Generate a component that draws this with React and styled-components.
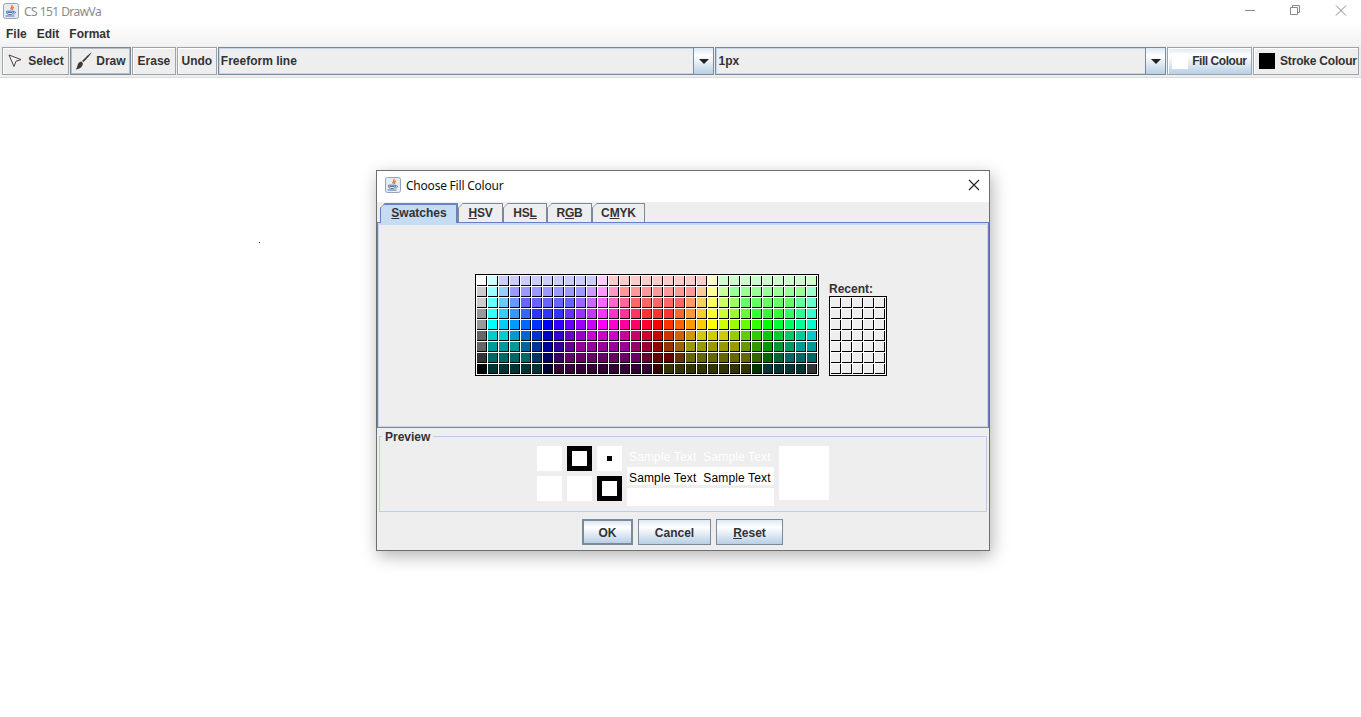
import React from "react";
import styled, { createGlobalStyle } from "styled-components";

const GlobalStyle = createGlobalStyle`
  html, body { margin: 0; padding: 0; background: #fff; }
  body { font-family: "Liberation Sans", Arial, sans-serif; overflow: hidden; }
`;

const expand = (row) =>
  row.split(" ").flatMap((part) => {
    const [hex, count] = part.split("*");
    return Array(Number(count || 1)).fill("#" + hex);
  });

const SWATCH_ROWS = [
  "ffffff ccffff ccccff*9 ffccff ffcccc*9 ffffcc ccffcc*9",
  "cccccc 99ffff 99ccff 9999ff*7 cc99ff ff99ff ff99cc ff9999*7 ffcc99 ffff99 ccff99 99ff99*7 99ffcc",
  "cccccc 66ffff 66ccff 6699ff 6666ff*5 9966ff cc66ff ff66ff ff66cc ff6699 ff6666*5 ff9966 ffcc66 ffff66 ccff66 99ff66 66ff66*5 66ff99 66ffcc",
  "999999 33ffff 33ccff 3399ff 3366ff 3333ff*3 6633ff 9933ff cc33ff ff33ff ff33cc ff3399 ff3366 ff3333*3 ff6633 ff9933 ffcc33 ffff33 ccff33 99ff33 66ff33 33ff33*3 33ff66 33ff99 33ffcc",
  "999999 00ffff 00ccff 0099ff 0066ff 0033ff 0000ff 3300ff 6600ff 9900ff cc00ff ff00ff ff00cc ff0099 ff0066 ff0033 ff0000 ff3300 ff6600 ff9900 ffcc00 ffff00 ccff00 99ff00 66ff00 33ff00 00ff00 00ff33 00ff66 00ff99 00ffcc",
  "666666 00cccc*2 0099cc 0066cc 0033cc 0000cc 3300cc 6600cc 9900cc cc00cc*3 cc0099 cc0066 cc0033 cc0000 cc3300 cc6600 cc9900 cccc00*3 99cc00 66cc00 33cc00 00cc00 00cc33 00cc66 00cc99 00cccc",
  "666666 009999*3 006699 003399 000099 330099 660099 990099*5 990066 990033 990000 993300 996600 999900*5 669900 339900 009900 009933 009966 009999*2",
  "333333 006666*4 003366 000066 330066 660066*7 660033 660000*2 663300 666600*6 336600 006600 006633 006666*3",
  "000000 003333*5 000033 330033*9 330000 333300*8 003300 003333*4 333333",
];
const SWATCHES = SWATCH_ROWS.flatMap(expand);
const RECENT = Array(35).fill("#eeeeee");

const Page = styled.div`
  position: relative;
  height: 717px;
  display: flex;
  flex-direction: column;
  background: #fff;
`;

const TitleBar = styled.div`
  height: 22px;
  display: flex;
  align-items: center;
  padding-left: 3px;
  background: #fff;
`;

const AppTitle = styled.span`
  margin-left: 5px;
  font-family: "Noto Sans", sans-serif;
  font-size: 12px;
  letter-spacing: -0.55px;
  color: #8a8a8a;
`;

const WindowControls = styled.div`
  margin: 0 -4px 0 auto;
  display: flex;
  align-items: center;
`;

const ControlIcon = styled.svg`
  width: 46px;
  height: 22px;
  display: block;
`;

const MenuBar = styled.div`
  height: 24px;
  display: flex;
  align-items: center;
  gap: 10px;
  padding: 0 0 0 6px;
  background: linear-gradient(#ffffff, #f3f3f3);
`;

const MenuItem = styled.span`
  font-size: 12px;
  font-weight: bold;
  color: #333;
`;

const Toolbar = styled.div`
  height: 28px;
  padding: 1px 2px 2px;
  display: flex;
  gap: 1px;
  background: #eeeeee;
  border-bottom: 1px solid #dcdcdc;
`;

const ToolButton = styled.button`
  box-sizing: border-box;
  width: ${(p) => p.$w}px;
  height: 28px;
  margin: 0;
  padding: ${(p) => (p.$chip ? `0 0 0 ${p.$chip}px` : "0")};
  display: flex;
  align-items: center;
  justify-content: ${(p) => (p.$chip ? "flex-start" : "center")};
  gap: ${(p) => p.$gap || 5}px;
  font: bold 12px "Liberation Sans", Arial, sans-serif;
  color: #333;
  background: ${(p) =>
    p.$hot ? "linear-gradient(#dde8f3, #ffffff 30%, #b8cfe5)" : "#eeeeee"};
  border: 1px solid ${(p) => (p.$dark ? "#7a8a99" : "#9aa5b1")};
  box-shadow: ${(p) =>
    p.$dark ? "inset 0 0 0 1px #b4bec9" : "inset 1px 1px 0 #fff"};
`;

const ChipLabel = styled.span`
  letter-spacing: ${(p) => p.$track}px;
`;

const ColourChip = styled.span`
  width: 16px;
  height: 16px;
  background: ${(p) => p.$color};
`;

const Combo = styled.div`
  box-sizing: border-box;
  width: ${(p) => p.$w}px;
  height: 28px;
  display: flex;
  background: #eeeeee;
  border: 1px solid #7a8a99;
  box-shadow: inset 0 0 0 1px #c5d6e8;
`;

const ComboValue = styled.div`
  flex: 1;
  padding: 6px 0 0 2px;
  font-size: 12px;
  font-weight: bold;
  color: #333;
`;

const ComboArrow = styled.div`
  width: 19px;
  display: flex;
  align-items: center;
  justify-content: center;
  background: linear-gradient(#dde8f3, #ffffff 30%, #b8cfe5);
  border-left: 1px solid #7a8a99;

  &::after {
    content: "";
    border-left: 5px solid transparent;
    border-right: 5px solid transparent;
    border-top: 5px solid #222;
  }
`;

const Canvas = styled.div`
  flex: 1;
  position: relative;
  background: #fff;
`;

const Speck = styled.div`
  position: absolute;
  left: 259px;
  top: 164px;
  width: 1px;
  height: 1px;
  background: #333;
`;

const Dialog = styled.div`
  position: absolute;
  left: 376px;
  top: 170px;
  box-sizing: border-box;
  width: 614px;
  height: 381px;
  display: flex;
  flex-direction: column;
  background: #eeeeee;
  border: 1px solid #6e6e6e;
  box-shadow: 2px 5px 16px rgba(0, 0, 0, 0.3);
`;

const DialogTitle = styled.div`
  height: 31px;
  flex: none;
  display: flex;
  align-items: center;
  padding: 0 0 3px 8px;
  box-sizing: border-box;
  background: #fff;
  font-family: "Noto Sans", sans-serif;
  font-size: 12px;
  letter-spacing: -0.22px;
  color: #111;
`;

const DialogTitleText = styled.span`
  margin-left: 5px;
`;

const CloseIcon = styled.svg`
  width: 12px;
  height: 12px;
  margin: 0 9px 0 auto;
`;

const TabStrip = styled.div`
  display: flex;
  flex: none;
  height: 20px;
  padding-left: 3px;
`;

const Tab = styled.div`
  position: relative;
  box-sizing: border-box;
  width: ${(p) => p.$w}px;
  height: ${(p) => (p.$active ? 20 : 19)}px;
  margin-top: 1px;
  text-align: center;
  padding-top: 2px;
  font-size: 12px;
  font-weight: bold;
  letter-spacing: ${(p) => (p.$active ? 0 : -0.15)}px;
  color: #333;
  background: ${(p) => (p.$active ? "#c5dcf2" : "#eeeeee")};
  border-top: 1px solid #7a8a99;
  border-right: 1px solid #7a8a99;
  border-left: 1px solid ${(p) => (p.$active ? "#6382bf" : "#7a8a99")};
  clip-path: polygon(5px 0, 100% 0, 100% 100%, 0 100%, 0 5px);

  &::before {
    content: "";
    position: absolute;
    left: -2px;
    top: 1px;
    width: 7px;
    height: 1px;
    background: #7a8a99;
    transform: rotate(-45deg);
  }

  ${(p) =>
    p.$active &&
    `
    box-shadow: inset -1px 0 0 #6382bf, inset 0 1px 0 #6382bf;
  `}
`;

const SwatchPane = styled.div`
  box-sizing: border-box;
  flex: none;
  height: 206px;
  padding: 0 4px 51px 0;
  display: flex;
  align-items: flex-end;
  justify-content: center;
  gap: 10px;
  background: #eeeeee;
  border: 1px solid #6382bf;
  border-bottom-color: #7a8a99;
  box-shadow: inset 0 2px 0 #c5dcf2, inset 0 0 0 1px #c5d6e8;
`;

const SwatchGrid = styled.div`
  display: grid;
  grid-template-columns: repeat(${(p) => p.$cols}, 10px);
  grid-auto-rows: 10px;
  gap: 1px;
  padding: 1px;
  background: #fff;
  border: 1px solid #000;
`;

const Swatch = styled.div`
  box-sizing: border-box;
  background: ${(p) => p.$color};
  border-right: 1px solid #000;
  border-bottom: 1px solid #000;
`;

const RecentColumn = styled.div`
  display: flex;
  flex-direction: column;
`;

const RecentLabel = styled.div`
  font-size: 12px;
  font-weight: bold;
  color: #333;
  line-height: 14px;
`;

const PreviewBox = styled.fieldset`
  box-sizing: border-box;
  flex: none;
  margin: 0 2px;
  padding: 0;
  height: 84px;
  min-width: 0;
  border: 1px solid #b8cfe5;
`;

const PreviewLegend = styled.legend`
  margin-left: 2px;
  padding: 2px 3px 0;
  font-size: 12px;
  font-weight: bold;
  color: #333;
  line-height: 14px;
`;

const PreviewBody = styled.div`
  display: flex;
  gap: 5px;
  margin-left: 157px;
  padding-top: 2px;
`;

const SquareGrid = styled.div`
  display: grid;
  grid-template-columns: repeat(3, 25px);
  grid-auto-rows: 25px;
  gap: 5px;
`;

const Square = styled.div`
  box-sizing: border-box;
  display: flex;
  align-items: center;
  justify-content: center;
  background: #fff;
  border: ${(p) => (p.$ring ? "5px solid #000" : "0")};
`;

const Pip = styled.div`
  width: 5px;
  height: 5px;
  background: #000;
`;

const SampleColumn = styled.div`
  width: 147px;
  display: flex;
  flex-direction: column;
`;

const SampleRow = styled.div`
  height: ${(p) => p.$h}px;
  margin-bottom: ${(p) => p.$gap}px;
  padding-left: 2px;
  font-family: "Liberation Sans", Arial, sans-serif;
  font-size: 12px;
  letter-spacing: 0.14px;
  line-height: 23px;
  white-space: pre;
  background: ${(p) => (p.$plain ? "transparent" : "#fff")};
  color: ${(p) => (p.$plain ? "#fff" : "#000")};
`;

const BigSquare = styled.div`
  width: 50px;
  height: 54px;
  background: #fff;
`;

const ButtonRow = styled.div`
  display: flex;
  justify-content: center;
  gap: 5px;
  padding: 7px 2px 0 0;
`;

const DialogButton = styled.button`
  box-sizing: border-box;
  width: ${(p) => p.$w}px;
  height: 26px;
  margin: 0;
  padding: 1px 0 0 1px;
  font: bold 12px "Liberation Sans", Arial, sans-serif;
  color: #333;
  background: linear-gradient(#dde8f3, #ffffff 30%, #b8cfe5);
  border: ${(p) => (p.$focus ? "2px solid #7a8a99" : "1px solid #7a8a99")};
`;

function JavaIcon() {
  return (
    <svg width="16" height="16" viewBox="0 0 16 16">
      <rect x="0.5" y="0.5" width="15" height="15" rx="2" fill="#e6ebf2" stroke="#93a5ba" />
      <path d="M8.800 2c1.400 1.700-2 2.700-.5 4.800M10.800 4c-1.800.8-1.400 1.800-.8 2.800" fill="none" stroke="#e8731a" strokeWidth="1.300" />
      <path d="M3.500 8.200h7c0 0 .2 3.300-2.200 3.300H5.700c-2.400 0-2.200-3.300-2.200-3.300z" fill="none" stroke="#4f78a8" strokeWidth="1" />
      <path d="M2.500 13h9M4.500 9.500h5" stroke="#4f78a8" strokeWidth="1" />
      <path d="M10.500 8.800h1.500c1 0 .8 2-1.500 2.200" fill="none" stroke="#4f78a8" strokeWidth="0.900" />
    </svg>
  );
}

function SelectIcon() {
  return (
    <svg width="16" height="16" viewBox="0 0 16 16">
      <path d="M2 2l12 4.600-5 1.600-2 5.300z" fill="#f4f4f4" stroke="#444" strokeWidth="1" strokeLinejoin="round" />
    </svg>
  );
}

function BrushIcon() {
  return (
    <svg width="17" height="18" viewBox="0 0 17 18">
      <path d="M16.500.5c.4.400-5 6.800-8.200 9.600l-1.200-1.200C10 5.900 16.100.1 16.500.5z" fill="#3a3a3a" />
      <path d="M6.400 9.500l1.400 1.400c.4 3-2.400 6.300-7.300 6.600 2-1.500 1.500-3.600 2.500-5.400.8-1.500 2-2.400 3.400-2.600z" fill="#3a3a3a" />
    </svg>
  );
}

export default function App() {
  return (
    <Page>
      <GlobalStyle />
      <TitleBar>
        <JavaIcon />
        <AppTitle>CS 151 DrawVa</AppTitle>
        <WindowControls>
          <ControlIcon viewBox="0 0 46 22">
            <path d="M18 10.500h10" stroke="#8a8a8a" />
          </ControlIcon>
          <ControlIcon viewBox="0 0 46 22">
            <path d="M17.500 7.500h7v7h-7zM19.500 7.500v-2h7v7h-2" fill="none" stroke="#8a8a8a" />
          </ControlIcon>
          <ControlIcon viewBox="0 0 46 22">
            <path d="M17 5.500l10 10M27 5.500l-10 10" stroke="#8a8a8a" />
          </ControlIcon>
        </WindowControls>
      </TitleBar>
      <MenuBar>
        <MenuItem>File</MenuItem>
        <MenuItem>Edit</MenuItem>
        <MenuItem>Format</MenuItem>
      </MenuBar>
      <Toolbar>
        <ToolButton $w={67}><SelectIcon />Select</ToolButton>
        <ToolButton $w={61} $dark $gap={4}><BrushIcon />Draw</ToolButton>
        <ToolButton $w={44}>Erase</ToolButton>
        <ToolButton $w={40}>Undo</ToolButton>
        <Combo $w={497}>
          <ComboValue>Freeform line</ComboValue>
          <ComboArrow />
        </Combo>
        <Combo $w={451}>
          <ComboValue>1px</ComboValue>
          <ComboArrow />
        </Combo>
        <ToolButton $w={85} $hot $chip={4} $gap={4}>
          <ColourChip $color="#fff" />
          <ChipLabel $track={-0.45}>Fill Colour</ChipLabel>
        </ToolButton>
        <ToolButton $w={106} $chip={5} $gap={5}>
          <ColourChip $color="#000" />
          <ChipLabel $track={-0.2}>Stroke Colour</ChipLabel>
        </ToolButton>
      </Toolbar>
      <Canvas>
        <Speck />
      </Canvas>
      <Dialog>
        <DialogTitle>
          <JavaIcon />
          <DialogTitleText>Choose Fill Colour</DialogTitleText>
          <CloseIcon viewBox="0 0 12 12">
            <path d="M1 1l10 10M11 1L1 11" stroke="#222" strokeWidth="1.100" />
          </CloseIcon>
        </DialogTitle>
        <TabStrip>
          <Tab $w={78} $active><u>S</u>watches</Tab>
          <Tab $w={45}><u>H</u>SV</Tab>
          <Tab $w={44}>HS<u>L</u></Tab>
          <Tab $w={45}>R<u>G</u>B</Tab>
          <Tab $w={53}>C<u>M</u>YK</Tab>
        </TabStrip>
        <SwatchPane>
          <SwatchGrid $cols={31}>
            {SWATCHES.map((c, i) => <Swatch key={i} $color={c} />)}
          </SwatchGrid>
          <RecentColumn>
            <RecentLabel>Recent:</RecentLabel>
            <SwatchGrid $cols={5}>
              {RECENT.map((c, i) => <Swatch key={i} $color={c} />)}
            </SwatchGrid>
          </RecentColumn>
        </SwatchPane>
        <PreviewBox>
          <PreviewLegend>Preview</PreviewLegend>
          <PreviewBody>
            <SquareGrid>
              <Square />
              <Square $ring />
              <Square><Pip /></Square>
              <Square />
              <Square />
              <Square $ring />
            </SquareGrid>
            <SampleColumn>
              <SampleRow $plain $h={21} $gap={0}>Sample Text  Sample Text</SampleRow>
              <SampleRow $h={18} $gap={3}>Sample Text  Sample Text</SampleRow>
              <SampleRow $h={18} $gap={0} />
            </SampleColumn>
            <BigSquare />
          </PreviewBody>
        </PreviewBox>
        <ButtonRow>
          <DialogButton $w={51} $focus>OK</DialogButton>
          <DialogButton $w={73}>Cancel</DialogButton>
          <DialogButton $w={67}><u>R</u>eset</DialogButton>
        </ButtonRow>
      </Dialog>
    </Page>
  );
}
